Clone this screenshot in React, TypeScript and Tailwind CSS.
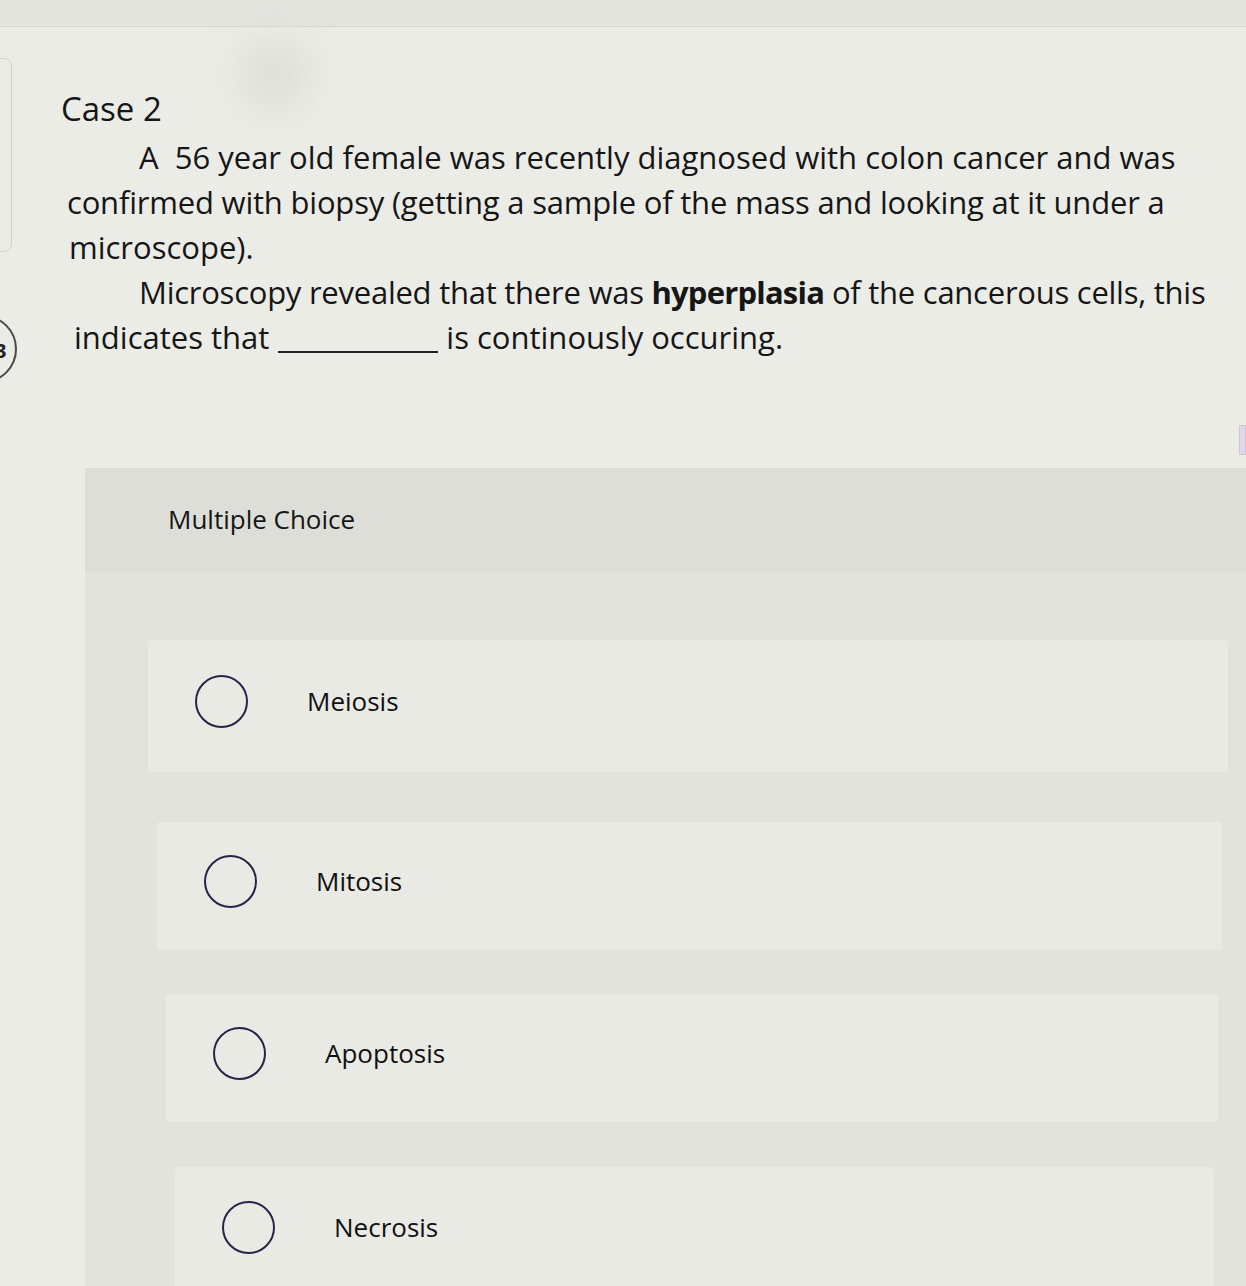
import React from "react";

const options = [
  { label: "Meiosis", card: "ml-[63px] w-[1080px] h-[132px]", gap: "" },
  { label: "Mitosis", card: "ml-[72px] w-[1065px] h-[128px]", gap: "mt-[50px]" },
  { label: "Apoptosis", card: "ml-[81px] w-[1052px] h-[127px]", gap: "mt-[45px]" },
  { label: "Necrosis", card: "ml-[90px] w-[1039px] h-[130px]", gap: "mt-[45px]" },
];

function Radio() {
  return <div className="w-[53px] h-[53px] shrink-0 rounded-full border-[2.5px] border-[#25254a]"></div>;
}

export default function App() {
  return (
    <div
      className="relative w-[1246px] h-[1286px] overflow-hidden bg-[#ecece7] text-[#161616] [font-variant-ligatures:none]"
      style={{ fontFamily: "'Open Sans', Lato, sans-serif" }}
    >
      {/* top strip */}
      <div className="h-[27px] bg-[#e4e4df] border-b border-[#d6d6d0]"></div>

      {/* stray bits of the screen around the page */}
      <div className="absolute left-[-20px] top-[58px] w-[32px] h-[194px] rounded-lg border border-[#d3d3cd]"></div>
      <div className="absolute left-[-51px] top-[315px] w-[68px] h-[68px] rounded-full border-2 border-[#4a4a4a]"></div>
      <div className="absolute left-[-5px] top-[336px] text-[20px] font-bold text-[#222]">3</div>
      <div className="absolute left-[238px] top-[38px] w-[72px] h-[72px] rounded-full bg-[#e0e0da] blur-lg"></div>
      <div className="absolute left-[1239px] top-[425px] w-[7px] h-[30px] border border-[#c9c9c9] bg-[#e3d5ee]"></div>

      {/* question */}
      <div className="pt-[61px]">
        <div className="ml-[61px] text-[33px] leading-[42px]">Case 2</div>
        <div className="mt-[5px] text-[31px] leading-[45px]">
          <div className="ml-[139px]">A&nbsp; 56 year old female was recently diagnosed with colon cancer and was</div>
          <div className="ml-[67px] tracking-[-0.2px]">confirmed with biopsy (getting a sample of the mass and looking at it under a</div>
          <div className="ml-[69px]">microscope).</div>
          <div className="ml-[139px] tracking-[-0.25px]">
            Microscopy revealed that there was <span className="font-bold tracking-[-0.8px]">hyperplasia</span> of the cancerous cells, this
          </div>
          <div className="ml-[74px] flex items-baseline">
            <span>indicates that</span>
            <span className="inline-block w-[160px] ml-[9px] mr-[8px] border-b-2 border-[#222] translate-y-[4px]"></span>
            <span>is continously occuring.</span>
          </div>
        </div>
      </div>

      {/* multiple choice panel */}
      <div className="mt-[108px] ml-[85px] bg-[#e3e3de] pb-[40px]">
        <div className="h-[104px] bg-[#dedeD9] pl-[83px] pb-[2px] flex items-center">
          <span className="text-[26px]">Multiple Choice</span>
        </div>
        <div className="pt-[68px]">
          {options.map((o) => (
            <div key={o.label} className={`${o.gap} ${o.card} rounded-sm bg-[#eaeae5] flex items-center pl-[47px] pb-[10px]`}>
              <Radio />
              <span className="ml-[59px] text-[26px] text-[#111]">{o.label}</span>
            </div>
          ))}
        </div>
      </div>
    </div>
  );
}
